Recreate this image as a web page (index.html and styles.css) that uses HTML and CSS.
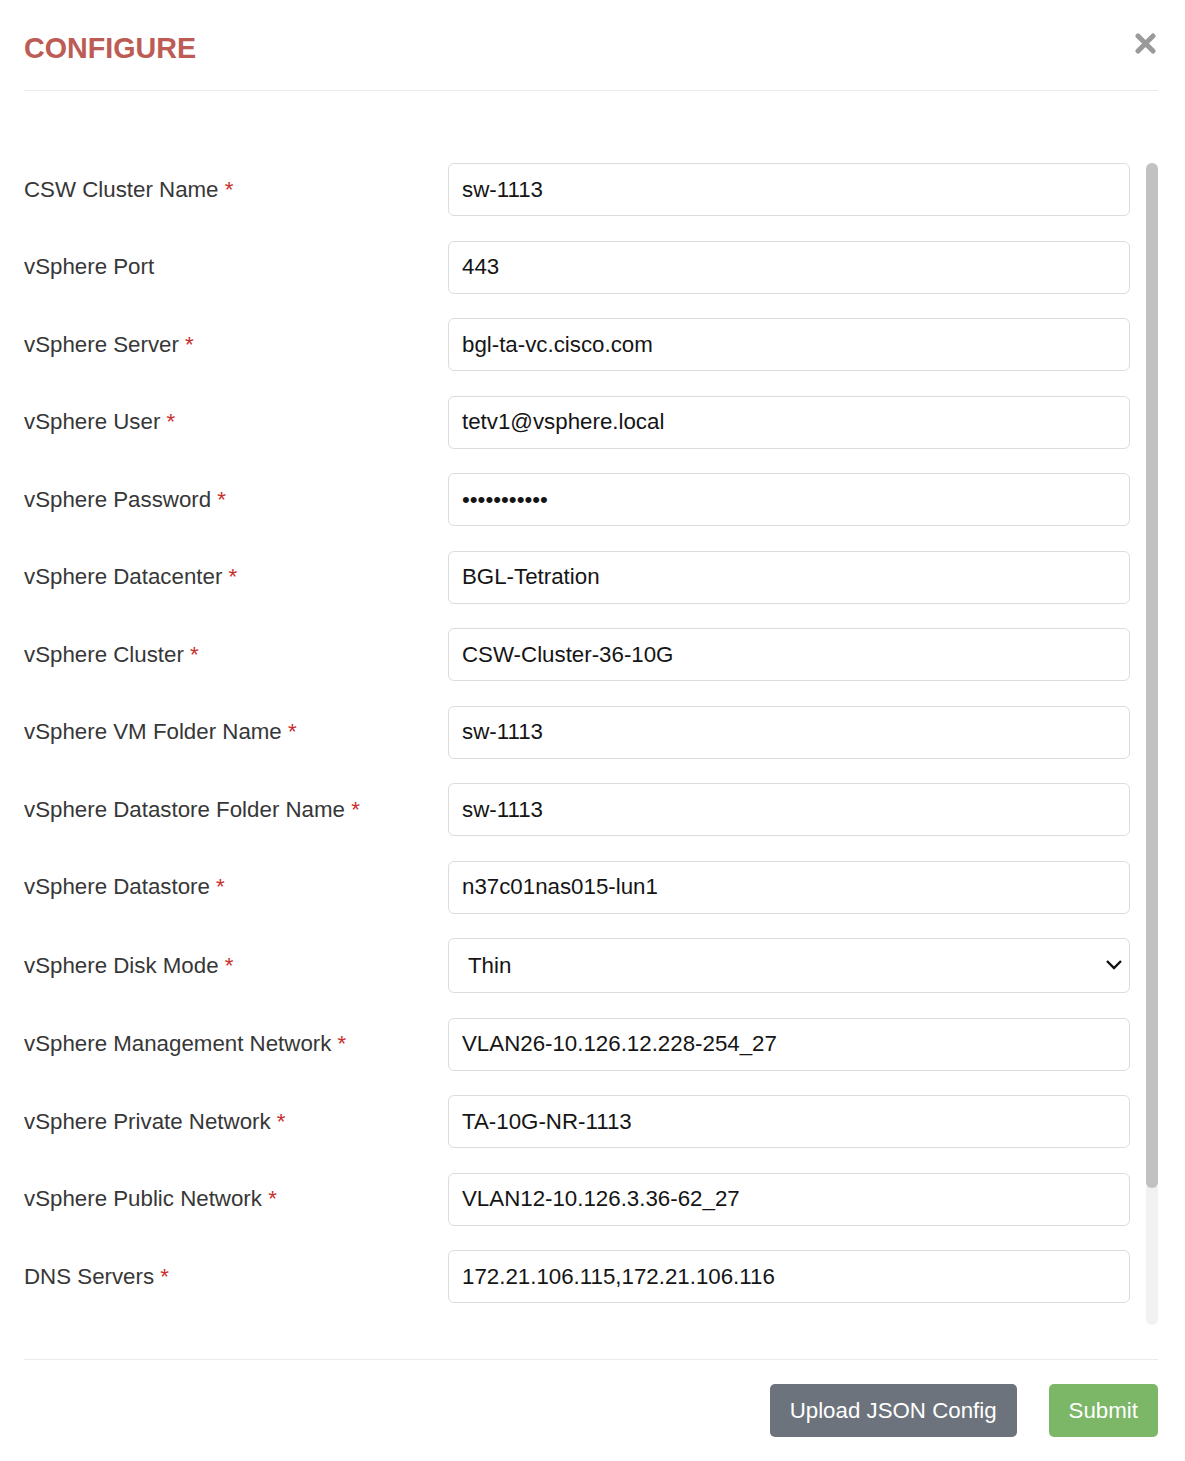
FILE: index.html
```html
<!DOCTYPE html>
<html lang="en">
<head>
  <meta charset="UTF-8">
  <meta name="viewport" content="width=device-width, initial-scale=1.0">
  <title>Configure</title>
  <link rel="stylesheet" href="styles.css">
</head>
<body>
  <div class="modal">
    <div class="modal-header">
      <h1 class="modal-title">CONFIGURE</h1>
      <button type="button" class="close-btn" aria-label="Close">
        <svg width="21" height="21" viewBox="0 0 21 21">
          <path d="M3 3 L18 18 M18 3 L3 18" stroke="#9a9a9a" stroke-width="5" stroke-linecap="round"/>
        </svg>
      </button>
    </div>

    <div class="modal-body">
      <form id="configForm" class="form-list">
        <div class="form-row">
          <label class="form-label">CSW Cluster Name <span class="req">*</span></label>
          <input class="form-input" type="text" name="clusterName" value="sw-1113">
        </div>
        <div class="form-row">
          <label class="form-label">vSphere Port</label>
          <input class="form-input" type="text" name="port" value="443">
        </div>
        <div class="form-row">
          <label class="form-label">vSphere Server <span class="req">*</span></label>
          <input class="form-input" type="text" name="server" value="bgl-ta-vc.cisco.com">
        </div>
        <div class="form-row">
          <label class="form-label">vSphere User <span class="req">*</span></label>
          <input class="form-input" type="text" name="user" value="tetv1@vsphere.local">
        </div>
        <div class="form-row">
          <label class="form-label">vSphere Password <span class="req">*</span></label>
          <input class="form-input" type="password" name="password" value="abcdefghijk">
        </div>
        <div class="form-row">
          <label class="form-label">vSphere Datacenter <span class="req">*</span></label>
          <input class="form-input" type="text" name="datacenter" value="BGL-Tetration">
        </div>
        <div class="form-row">
          <label class="form-label">vSphere Cluster <span class="req">*</span></label>
          <input class="form-input" type="text" name="cluster" value="CSW-Cluster-36-10G">
        </div>
        <div class="form-row">
          <label class="form-label">vSphere VM Folder Name <span class="req">*</span></label>
          <input class="form-input" type="text" name="vmFolder" value="sw-1113">
        </div>
        <div class="form-row">
          <label class="form-label">vSphere Datastore Folder Name <span class="req">*</span></label>
          <input class="form-input" type="text" name="dsFolder" value="sw-1113">
        </div>
        <div class="form-row">
          <label class="form-label">vSphere Datastore <span class="req">*</span></label>
          <input class="form-input" type="text" name="datastore" value="n37c01nas015-lun1">
        </div>
        <div class="form-row">
          <label class="form-label">vSphere Disk Mode <span class="req">*</span></label>
          <div class="select-wrap">
            <select class="form-input form-select" name="diskMode">
              <option selected>Thin</option>
              <option>Thick</option>
            </select>
            <svg class="select-arrow" width="18" height="12" viewBox="0 0 18 12">
              <path d="M2 2 L9 9 L16 2" fill="none" stroke="#111" stroke-width="2.4"/>
            </svg>
          </div>
        </div>
        <div class="form-row">
          <label class="form-label">vSphere Management Network <span class="req">*</span></label>
          <input class="form-input" type="text" name="mgmtNet" value="VLAN26-10.126.12.228-254_27">
        </div>
        <div class="form-row">
          <label class="form-label">vSphere Private Network <span class="req">*</span></label>
          <input class="form-input" type="text" name="privNet" value="TA-10G-NR-1113">
        </div>
        <div class="form-row">
          <label class="form-label">vSphere Public Network <span class="req">*</span></label>
          <input class="form-input" type="text" name="pubNet" value="VLAN12-10.126.3.36-62_27">
        </div>
        <div class="form-row">
          <label class="form-label">DNS Servers <span class="req">*</span></label>
          <input class="form-input" type="text" name="dns" value="172.21.106.115,172.21.106.116">
        </div>
      </form>
      <div class="scroll-track">
        <div class="scroll-thumb"></div>
      </div>
    </div>

    <div class="modal-footer">
      <button type="button" class="btn btn-secondary">Upload JSON Config</button>
      <button type="submit" form="configForm" class="btn btn-success">Submit</button>
    </div>
  </div>
</body>
</html>
```

FILE: styles.css
```css
body {
  margin: 0;
  background: #fff;
  font-family: "Liberation Sans", Arial, sans-serif;
  color: #333;
}

.modal {
  padding: 0 27px 0 24px;
}

.modal-header {
  height: 91px;
  box-sizing: border-box;
  padding-top: 32px;
  display: flex;
  align-items: flex-start;
  justify-content: space-between;
  border-bottom: 1px solid #ebebeb;
}

.modal-title {
  margin: 0;
  font-size: 28.7px;
  line-height: 33px;
  font-weight: bold;
  color: #bd5b55;
}

.close-btn {
  border: none;
  background: none;
  padding: 0;
  margin: 1px 2px 0 0;
  width: 21px;
  height: 21px;
  cursor: pointer;
}

.close-btn svg {
  display: block;
}

.modal-body {
  margin-top: 72px;
  height: 1162px;
  display: flex;
  gap: 16px;
}

.form-list {
  display: flex;
  flex-direction: column;
  gap: 24.5px;
}

.scroll-track {
  width: 12px;
  background: #f1f1f1;
  border-radius: 6px;
}

.scroll-thumb {
  height: 1025px;
  background: #c1c1c1;
  border-radius: 6px;
}

.form-row {
  display: flex;
  align-items: center;
}

.form-label {
  width: 424px;
  flex-shrink: 0;
  font-size: 22.3px;
  color: #373737;
}

.req {
  color: #c9302c;
}

.form-input {
  width: 682px;
  height: 53px;
  box-sizing: border-box;
  border: 1px solid #dcdcdc;
  border-radius: 6px;
  padding: 0 13px;
  font-family: "Liberation Sans", Arial, sans-serif;
  font-size: 22.3px;
  color: #151515;
  background: #fff;
  outline: none;
}

.select-wrap {
  position: relative;
  width: 682px;
}

.form-select {
  height: 55px;
  padding-left: 19px;
  appearance: none;
  -webkit-appearance: none;
}

.select-arrow {
  position: absolute;
  right: 7px;
  top: 21px;
  pointer-events: none;
}

.modal-footer {
  margin-top: 34px;
  border-top: 1px solid #ebebeb;
  padding: 24px 0;
  display: flex;
  justify-content: flex-end;
  gap: 32px;
}

.btn {
  height: 53px;
  padding: 0 20px;
  border: none;
  border-radius: 5px;
  font-family: "Liberation Sans", Arial, sans-serif;
  font-size: 22.3px;
  color: #fff;
  cursor: pointer;
}

.btn-secondary {
  background: #6c737c;
}

.btn-success {
  background: #7bb767;
}
```
